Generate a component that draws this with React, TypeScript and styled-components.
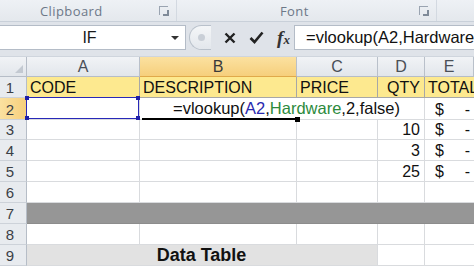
import { FC, ReactNode } from 'react'
import styled, { createGlobalStyle } from 'styled-components'

const GlobalStyle = createGlobalStyle`
  * { box-sizing: border-box; }
  html, body { margin: 0; padding: 0; background: #ffffff; }
  body { width: 474px; height: 266px; overflow: hidden; font-family: "Liberation Sans", Arial, sans-serif; }
`

const Page = styled.div`
  width: 474px;
  height: 266px;
  display: flex;
  flex-direction: column;
  overflow: hidden;
`

const Ribbon = styled.div`
  height: 22px;
  display: flex;
  background: linear-gradient(#eef1f5, #e4e8ed);
  border-bottom: 1px solid #c9d0d9;
`

const Group = styled.div<{ $width: number; $pad: number }>`
  width: ${p => p.$width}px;
  flex: none;
  display: flex;
  align-items: center;
  padding-left: ${p => p.$pad}px;
  padding-right: 8px;
  border-right: 1px solid #d3d9e1;
`

const GroupLabel = styled.span`
  font-family: "Open Sans", "Noto Sans", sans-serif;
  font-size: 13px;
  color: #6d7888;
  letter-spacing: 0.4px;
`

const Launcher = styled.span`
  margin-left: auto;
  width: 9px;
  height: 9px;
  border-top: 1px solid #9aa4b1;
  border-left: 1px solid #9aa4b1;
  position: relative;
  &::after {
    content: '';
    position: absolute;
    right: -1px;
    bottom: -1px;
    width: 4px;
    height: 4px;
    border-right: 2px solid #7f8a98;
    border-bottom: 2px solid #7f8a98;
  }
`

const FormulaArea = styled.div`
  height: 35px;
  display: flex;
  align-items: flex-start;
  padding-top: 3px;
  background: #dfe3e9;
  border-bottom: 1px solid #cfd5dd;
`

const NameBox = styled.div`
  width: 186px;
  height: 25px;
  flex: none;
  display: flex;
  align-items: center;
  background: #ffffff;
  border: 1px solid #b4bcc7;
  border-left: none;
  font-size: 16px;
  color: #1a1a1a;
`

const NameText = styled.span`
  flex: 1;
  text-align: center;
  padding-left: 8px;
`

const DropArrow = styled.span`
  width: 0;
  height: 0;
  margin-right: 6px;
  border-left: 4px solid transparent;
  border-right: 4px solid transparent;
  border-top: 4px solid #333;
`

const Tools = styled.div`
  width: 108px;
  height: 25px;
  flex: none;
  display: flex;
  align-items: center;
  padding-left: 3px;
  gap: 10px;
`

const Grip = styled.span`
  width: 22px;
  height: 25px;
  display: flex;
  align-items: center;
  padding-left: 8px;
  border: 1px solid #b9c1cb;
  border-right: none;
  border-radius: 13px 0 0 13px;
  background: linear-gradient(#f4f6f8, #e3e7ec);
  &::before {
    content: '';
    width: 7px;
    height: 7px;
    border-radius: 50%;
    background: #c9cfd7;
  }
`

const ToolIcon = styled.span`
  display: flex;
  align-items: center;
  justify-content: center;
  width: 17px;
  height: 25px;
`

const Fx = styled.span`
  font-family: "Liberation Serif", "Times New Roman", serif;
  font-style: italic;
  font-weight: bold;
  font-size: 19px;
  color: #333;
  & small { font-size: 13px; }
`

const FormulaInput = styled.div`
  flex: 1;
  height: 25px;
  display: flex;
  align-items: center;
  padding-left: 11px;
  background: #ffffff;
  border: 1px solid #b4bcc7;
  border-right: none;
  font-size: 16.5px;
  color: #111;
  white-space: nowrap;
  overflow: hidden;
`

const Sheet = styled.div`
  flex: 1;
  display: grid;
  grid-template-columns: 27px 113px 157px 81px 47px 49px;
  grid-template-rows: 20px 21px 22px 20px 21px 21px 21px 21px 21px 21px;
  background: #ffffff;
`

const Corner = styled.div`
  background: linear-gradient(#f1f3f6, #e2e6eb);
  border-right: 1px solid #b6bdc7;
  border-bottom: 1px solid #b6bdc7;
  position: relative;
  &::after {
    content: '';
    position: absolute;
    right: 3px;
    bottom: 3px;
    border-left: 8px solid transparent;
    border-bottom: 8px solid #c3c9d1;
  }
`

const ColHead = styled.div<{ $active?: boolean }>`
  display: flex;
  align-items: center;
  justify-content: center;
  font-size: 16px;
  color: ${p => (p.$active ? '#3a3a3a' : '#4a4f57')};
  background: ${p => (p.$active ? 'linear-gradient(#fbe1a0, #f6cf7c)' : 'linear-gradient(#f1f3f6, #e2e6eb)')};
  border-right: 1px solid #b9c0ca;
  border-bottom: 1px solid ${p => (p.$active ? '#e0a94a' : '#b6bdc7')};
`

const RowHead = styled.div<{ $active?: boolean }>`
  display: flex;
  align-items: flex-end;
  justify-content: center;
  padding-right: 6px;
  font-size: 15px;
  line-height: 18px;
  color: #3b3f46;
  background: ${p => (p.$active ? 'linear-gradient(90deg, #fbe1a0, #f6cf7c)' : '#e8ebef')};
  border-right: 1px solid ${p => (p.$active ? '#e0a94a' : '#b6bdc7')};
  border-bottom: 1px solid #cdd2d9;
`

const Cell = styled.div<{
  $bg?: string
  $align?: 'left' | 'right' | 'center'
  $line?: string
  $noRight?: boolean
  $bold?: boolean
}>`
  position: relative;
  display: flex;
  align-items: flex-end;
  justify-content: ${p => (p.$align === 'right' ? 'flex-end' : p.$align === 'center' ? 'center' : 'flex-start')};
  padding: 0 4px 0 3px;
  font-size: ${p => (p.$bold ? '18px' : '16px')};
  line-height: 19px;
  font-weight: ${p => (p.$bold ? 'bold' : 'normal')};
  color: #111;
  white-space: nowrap;
  background: ${p => p.$bg ?? 'transparent'};
  border-right: ${p => (p.$noRight ? 'none' : `1px solid ${p.$line ?? '#d9dbde'}`)};
  border-bottom: 1px solid ${p => p.$line ?? '#d9dbde'};
`

const Span = styled(Cell)<{ $cols: number }>`
  grid-column: span ${p => p.$cols};
`

const RefBox = styled.div`
  position: absolute;
  inset: -1px 0 0 -1px;
  border: 1px solid #2828b8;
  & i {
    position: absolute;
    width: 4px;
    height: 4px;
    background: #1f1fa8;
  }
`

const EditCell = styled(Cell)`
  overflow: visible;
  z-index: 2;
  &::after {
    content: '';
    position: absolute;
    left: 2px;
    right: 0;
    bottom: -1px;
    height: 2px;
    background: #000;
  }
`

const FillHandle = styled.span`
  position: absolute;
  right: -3px;
  bottom: -3px;
  width: 5px;
  height: 5px;
  background: #000;
`

const Formula = styled.span`
  position: absolute;
  left: 33px;
  bottom: 1px;
  font-size: 16.5px;
  line-height: 19px;
`

const Ref = styled.span<{ $c: string }>`
  color: ${p => p.$c};
`

const Money = styled.div`
  width: 100%;
  display: flex;
  justify-content: space-between;
  padding: 0 0 0 7px;
  margin-right: -3px;
`

const HEAD_LINE = '#a7a7a7'
const YELLOW = '#fde98f'

const FormulaText: FC = () => (
  <>
    =vlookup(<Ref $c="#2a2ab0">A2</Ref>,<Ref $c="#2c8a3c">Hardware</Ref>,2,false)
  </>
)

const MoneyCell: FC<{ children?: ReactNode }> = () => (
  <Cell $noRight>
    <Money>
      <span>$</span>
      <span>-</span>
    </Money>
  </Cell>
)

const qty: Record<number, string> = { 3: '10', 4: '3', 5: '25' }

const Row: FC<{ n: number }> = ({ n }) => (
  <>
    <RowHead>{n}</RowHead>
    <Cell />
    <Cell />
    <Cell />
    <Cell $align="right">{qty[n] ?? ''}</Cell>
    {qty[n] ? <MoneyCell /> : <Cell $noRight />}
  </>
)

const App: FC = () => {
  return (
    <Page>
      <GlobalStyle />
      <Ribbon>
        <Group $width={177} $pad={40}>
          <GroupLabel>Clipboard</GroupLabel>
          <Launcher />
        </Group>
        <Group $width={260} $pad={103}>
          <GroupLabel>Font</GroupLabel>
          <Launcher />
        </Group>
      </Ribbon>
      <FormulaArea>
        <NameBox>
          <NameText>IF</NameText>
          <DropArrow />
        </NameBox>
        <Tools>
          <Grip />
          <ToolIcon>
            <svg width="12" height="12" viewBox="0 0 12 12">
              <path d="M1.5 1.5 L10.5 10.5 M10.5 1.5 L1.5 10.5" stroke="#222" strokeWidth="2.4" />
            </svg>
          </ToolIcon>
          <ToolIcon>
            <svg width="15" height="13" viewBox="0 0 15 13">
              <path d="M1.5 7 L5.5 11 L13.5 1.5" stroke="#222" strokeWidth="2.6" fill="none" />
            </svg>
          </ToolIcon>
          <ToolIcon>
            <Fx>
              f<small>x</small>
            </Fx>
          </ToolIcon>
        </Tools>
        <FormulaInput>=vlookup(A2,Hardware,2,false)</FormulaInput>
      </FormulaArea>
      <Sheet>
        <Corner />
        <ColHead>A</ColHead>
        <ColHead $active>B</ColHead>
        <ColHead>C</ColHead>
        <ColHead>D</ColHead>
        <ColHead>E</ColHead>

        <RowHead>1</RowHead>
        <Cell $bg={YELLOW} $line={HEAD_LINE}>CODE</Cell>
        <Cell $bg={YELLOW} $line={HEAD_LINE}>DESCRIPTION</Cell>
        <Cell $bg={YELLOW} $line={HEAD_LINE}>PRICE</Cell>
        <Cell $bg={YELLOW} $line={HEAD_LINE} $align="right">QTY</Cell>
        <Cell $bg={YELLOW} $line={HEAD_LINE} $noRight>TOTAL</Cell>

        <RowHead $active>2</RowHead>
        <Cell>
          <RefBox>
            <i style={{ left: -2, top: -2 }} />
            <i style={{ right: -2, top: -2 }} />
            <i style={{ left: -2, bottom: -2 }} />
            <i style={{ right: -2, bottom: -2 }} />
          </RefBox>
        </Cell>
        <EditCell $noRight>
          <Formula>
            <FormulaText />
          </Formula>
          <FillHandle />
        </EditCell>
        <Cell $noRight />
        <Cell />
        <MoneyCell />

        {[3, 4, 5, 6].map(r => (
          <Row key={r} n={r} />
        ))}

        <RowHead>7</RowHead>
        <Span $cols={5} $bg="#969696" $line="#8c8c8c" $noRight />

        <Row n={8} />

        <RowHead>9</RowHead>
        <Span $cols={3} $bg="#e2e2e2" $align="center" $bold>
          Data Table
        </Span>
        <Cell />
        <Cell $noRight />
      </Sheet>
    </Page>
  )
}

export default App
